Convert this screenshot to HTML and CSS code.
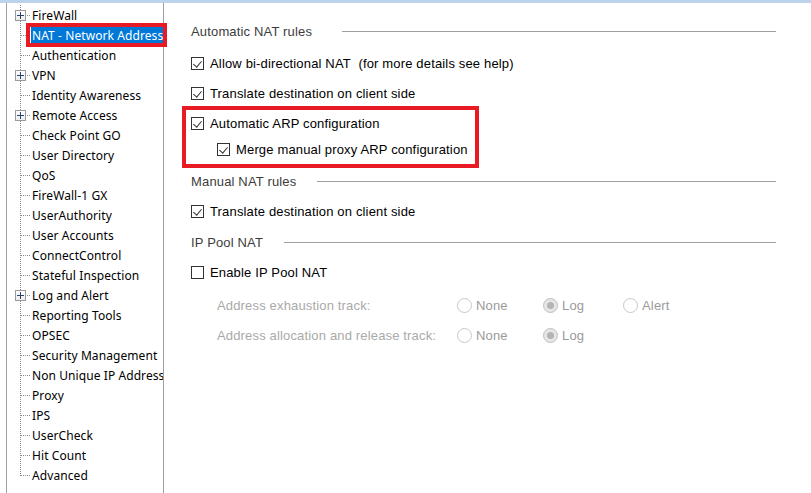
FILE: index.html
```html
<!DOCTYPE html>
<html lang="en">
<head>
<meta charset="utf-8">
<title>NAT - Network Address Translation</title>
<link rel="stylesheet" href="styles.css">
</head>
<body>
<div class="topbar"></div>
<div class="main">
  <nav class="tree">
    <ul class="tree-list">
      <li class="node"><span class="conn"><span class="plus"></span></span><span class="label">FireWall</span></li>
      <li class="node selected"><span class="conn"></span><span class="label">NAT - Network Address Translation</span></li>
      <li class="node"><span class="conn"></span><span class="label">Authentication</span></li>
      <li class="node"><span class="conn"><span class="plus"></span></span><span class="label">VPN</span></li>
      <li class="node"><span class="conn"></span><span class="label">Identity Awareness</span></li>
      <li class="node"><span class="conn"><span class="plus"></span></span><span class="label">Remote Access</span></li>
      <li class="node"><span class="conn"></span><span class="label">Check Point GO</span></li>
      <li class="node"><span class="conn"></span><span class="label">User Directory</span></li>
      <li class="node"><span class="conn"></span><span class="label">QoS</span></li>
      <li class="node"><span class="conn"></span><span class="label">FireWall-1 GX</span></li>
      <li class="node"><span class="conn"></span><span class="label">UserAuthority</span></li>
      <li class="node"><span class="conn"></span><span class="label">User Accounts</span></li>
      <li class="node"><span class="conn"></span><span class="label">ConnectControl</span></li>
      <li class="node"><span class="conn"></span><span class="label">Stateful Inspection</span></li>
      <li class="node"><span class="conn"><span class="plus"></span></span><span class="label">Log and Alert</span></li>
      <li class="node"><span class="conn"></span><span class="label">Reporting Tools</span></li>
      <li class="node"><span class="conn"></span><span class="label">OPSEC</span></li>
      <li class="node"><span class="conn"></span><span class="label">Security Management</span></li>
      <li class="node"><span class="conn"></span><span class="label">Non Unique IP Address Ranges</span></li>
      <li class="node"><span class="conn"></span><span class="label">Proxy</span></li>
      <li class="node"><span class="conn"></span><span class="label">IPS</span></li>
      <li class="node"><span class="conn"></span><span class="label">UserCheck</span></li>
      <li class="node"><span class="conn"></span><span class="label">Hit Count</span></li>
      <li class="node last"><span class="conn"></span><span class="label">Advanced</span></li>
    </ul>
  </nav>

  <section class="panel">
    <div class="group-title first">Automatic NAT rules</div>
    <label class="check-row after-title"><span class="box checked"></span>Allow bi-directional NAT&nbsp; (for more details see help)</label>
    <label class="check-row"><span class="box checked"></span>Translate destination on client side</label>
    <label class="check-row"><span class="box checked"></span>Automatic ARP configuration</label>
    <label class="check-row nested"><span class="box checked"></span>Merge manual proxy ARP configuration</label>

    <div class="group-title after-title">Manual NAT rules</div>
    <label class="check-row"><span class="box checked"></span>Translate destination on client side</label>

    <div class="group-title spaced">IP Pool NAT</div>
    <label class="check-row"><span class="box"></span>Enable IP Pool NAT</label>

    <div class="radio-row first-radio">
      <span class="radio-label">Address exhaustion track:</span>
      <span class="radio"><span class="dot"></span>None</span>
      <span class="radio"><span class="dot on"></span>Log</span>
      <span class="radio"><span class="dot"></span>Alert</span>
    </div>
    <div class="radio-row">
      <span class="radio-label">Address allocation and release track:</span>
      <span class="radio"><span class="dot"></span>None</span>
      <span class="radio"><span class="dot on"></span>Log</span>
    </div>
  </section>

  <div class="mark mark-nat"></div>
  <div class="mark mark-arp"></div>
</div>
</body>
</html>
```

FILE: styles.css
```css
* { box-sizing: border-box; }

html, body {
  margin: 0;
  padding: 0;
  background: #ffffff;
  height: 100%;
  overflow: hidden;
}

body {
  font-family: "Liberation Sans", Arial, sans-serif;
  font-size: 13px;
  color: #000;
}

.topbar {
  height: 3px;
  background: #bcd3ec;
}

.main {
  position: relative;
  display: flex;
  height: calc(100% - 3px);
}

/* ---------- tree ---------- */
.tree {
  width: 158px;
  margin-left: 6px;
  border-left: 1px solid #a0a0a0;
  border-right: 1px solid #a0a0a0;
  overflow: hidden;
  flex: none;
}

.tree-list {
  list-style: none;
  margin: 0;
  padding: 2px 0 0 0;
  font-family: "Noto Sans", "Open Sans", sans-serif;
  font-size: 12px;
  letter-spacing: 0.08px;
}

.node {
  display: flex;
  align-items: center;
  height: 20px;
  white-space: nowrap;
}

.conn {
  flex: none;
  width: 24px;
  height: 20px;
  display: flex;
  align-items: center;
  background-image:
    repeating-linear-gradient(to bottom, #8a8a8a 0 1px, transparent 1px 2px),
    repeating-linear-gradient(to right, #8a8a8a 0 1px, transparent 1px 2px);
  background-size: 1px 20px, 10px 1px;
  background-position: 13px 0, 14px 10px;
  background-repeat: no-repeat;
}

.node.last .conn {
  background-size: 1px 11px, 10px 1px;
}

.plus {
  width: 11px;
  height: 11px;
  margin-left: 8px;
  border: 1px solid #9a9a9a;
  background: linear-gradient(#ffffff, #ececec);
  position: relative;
}

.plus::before,
.plus::after {
  content: "";
  position: absolute;
  background: #26446f;
}

.plus::before { width: 7px; height: 1px; left: 1px; top: 4px; }
.plus::after { width: 1px; height: 7px; left: 4px; top: 1px; }

.label {
  padding: 0 1px;
  line-height: 17px;
  color: #000;
}

.node.selected .label {
  flex: 1;
  background: #0078d7;
  color: #fff;
  overflow: hidden;
}

/* ---------- right panel ---------- */
.panel {
  flex: 1;
  padding: 18px 35px 0 27px;
  display: flex;
  flex-direction: column;
  gap: 10px;
  letter-spacing: 0.16px;
}

.group-title {
  display: flex;
  align-items: center;
  height: 20px;
  color: #3c3c3c;
  white-space: nowrap;
}

.group-title::after {
  content: "";
  flex: 1;
  height: 1px;
  background: #a0a0a0;
  margin-left: 21px;
}

.group-title.first::after { margin-left: 30px; }
.group-title.spaced { margin-top: 1px; }
.after-title { margin-top: 2px; }

.check-row {
  display: flex;
  align-items: center;
  height: 20px;
  white-space: nowrap;
  color: #000;
}

.check-row.nested {
  margin-top: -4px;
  padding-left: 26px;
}

.box {
  flex: none;
  width: 13px;
  height: 13px;
  margin-right: 6px;
  border: 1px solid #333;
  background: #fff;
  position: relative;
}

.box.checked::after {
  content: "";
  position: absolute;
  left: 3px;
  top: 1px;
  width: 4px;
  height: 7px;
  border-right: 1.4px solid #333;
  border-bottom: 1.4px solid #333;
  transform: rotate(40deg);
}

.radio-row {
  display: grid;
  grid-template-columns: 240px 86px 80px auto;
  align-items: center;
  height: 20px;
  padding-left: 26px;
  color: #a9a9a9;
  white-space: nowrap;
}

.radio-row.first-radio { margin-top: 3px; }

.radio {
  display: flex;
  align-items: center;
  gap: 4px;
  color: #9a9a9a;
}

.dot {
  width: 15px;
  height: 15px;
  border-radius: 50%;
  border: 1px solid #c8c8c8;
  background: #fff;
  position: relative;
}

.dot.on {
  background: #e6e6e6;
  border-color: #bfbfbf;
}

.dot.on::after {
  content: "";
  position: absolute;
  left: 3px;
  top: 3px;
  width: 7px;
  height: 7px;
  border-radius: 50%;
  background: #b4b4b4;
}

/* ---------- annotations ---------- */
.mark {
  position: absolute;
  border: 4px solid #e81b24;
  pointer-events: none;
}

.mark-nat {
  left: 26px;
  top: 20px;
  width: 141px;
  height: 24px;
}

.mark-arp {
  left: 182px;
  top: 103px;
  width: 297px;
  height: 62px;
}
```
